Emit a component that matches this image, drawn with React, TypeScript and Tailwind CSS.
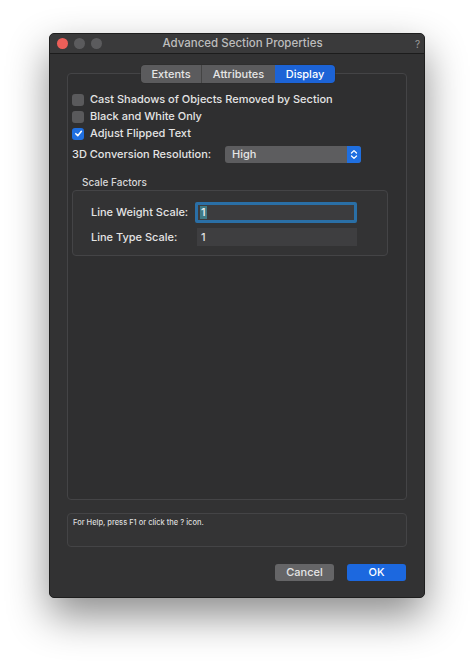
import React from "react";

const font = { fontFamily: '"Inter", "Liberation Sans", sans-serif' };

const Checkbox = ({ checked, label }: { checked?: boolean; label: string }) => (
  <div className="flex items-center gap-[6px] h-[17px]">
    {checked ? (
      <div className="w-[12px] h-[12px] rounded-[3px] bg-[#1f6fe0] flex items-center justify-center">
        <svg width="9" height="9" viewBox="0 0 10 10">
          <path d="M2 5.2 L4.2 7.4 L8.2 2.6" stroke="white" strokeWidth="1.7" fill="none" strokeLinecap="round" strokeLinejoin="round" />
        </svg>
      </div>
    ) : (
      <div className="w-[12px] h-[12px] rounded-[3px] bg-[#5a5a5c]" />
    )}
    <span className="text-[11px] font-medium text-[#e4e4e4]">{label}</span>
  </div>
);

const App = () => {
  return (
    <div className="w-[474px] h-[664px] bg-white pt-[33px] pl-[49px]" style={font}>
      <div className="w-[376px] h-[565px] bg-[#323233] rounded-[5px] border border-[#1e1e1e] shadow-[0_18px_40px_rgba(0,0,0,0.45)] flex flex-col overflow-hidden">
        {/* title bar */}
        <div className="h-[20px] bg-[#3a3a3b] border-b border-[#1c1c1c] flex items-center px-[7px] relative">
          <div className="flex gap-[6px]">
            <div className="w-[11px] h-[11px] rounded-full bg-[#ec5f59]" />
            <div className="w-[11px] h-[11px] rounded-full bg-[#5b5b5d]" />
            <div className="w-[11px] h-[11px] rounded-full bg-[#5b5b5d]" />
          </div>
          <div className="flex-1 text-center text-[11.5px] font-medium text-[#bdbdbd] pr-[34px]">Advanced Section Properties</div>
          <span className="absolute right-[4px] top-[3px] text-[10px] text-[#9a9a9a]">?</span>
        </div>

        <div className="flex-1 flex flex-col px-[17px]">
          {/* tab panel */}
          <div className="relative mt-[19px] h-[427px] rounded-[4px] border border-[#444446] bg-[#2f2f30]">
            <div className="absolute -top-[9px] left-[73px] flex h-[18px] rounded-[4px] overflow-hidden text-[11px] font-medium text-[#e6e6e6] shadow-[0_0_0_0.5px_#2a2a2a]">
              <div className="w-[61px] bg-[#5b5b5d] flex items-center justify-center border-r border-[#444]">Extents</div>
              <div className="w-[73px] bg-[#5b5b5d] flex items-center justify-center">Attributes</div>
              <div className="w-[60px] bg-[#1c63d6] text-white flex items-center justify-center">Display</div>
            </div>

            <div className="pt-[17px] pl-[4px] flex flex-col">
              <Checkbox label="Cast Shadows of Objects Removed by Section" />
              <Checkbox label="Black and White Only" />
              <Checkbox checked label="Adjust Flipped Text" />

              <div className="flex items-center mt-[4px] h-[17px]">
                <span className="text-[11px] font-medium text-[#e4e4e4] w-[153px]">3D Conversion Resolution:</span>
                <div className="w-[136px] h-[17px] rounded-[3px] bg-[#5d5d5f] flex items-center">
                  <span className="flex-1 pl-[7px] text-[11px] font-medium text-[#e6e6e6]">High</span>
                  <div className="w-[14px] h-[17px] rounded-r-[3px] bg-[#1f6fe0] flex items-center justify-center">
                    <svg width="8" height="11" viewBox="0 0 8 11">
                      <path d="M1.5 4 L4 1.6 L6.5 4 M1.5 7 L4 9.4 L6.5 7" stroke="white" strokeWidth="1.3" fill="none" strokeLinecap="round" strokeLinejoin="round" />
                    </svg>
                  </div>
                </div>
              </div>

              <div className="mt-[12px] pl-[10px] text-[10px] font-medium text-[#d8d8d8]">Scale Factors</div>
              <div className="mt-[0px] mr-[18px] h-[66px] rounded-[4px] border border-[#444446] bg-[#333334] pt-[11px] pl-[18px] flex flex-col gap-[5px]">
                <div className="flex items-center">
                  <span className="w-[104px] text-[11px] font-medium text-[#e4e4e4]">Line Weight Scale:</span>
                  <div className="w-[162px] h-[21px] rounded-[2px] border-[3px] border-[#2a6fa6] bg-[#3c3c3e] flex items-center pl-[2px]">
                    <span className="text-[11px] font-medium text-[#f0f0f0] bg-[#3f7a86] px-[1px] leading-[13px]">1</span>
                  </div>
                </div>
                <div className="flex items-center">
                  <span className="w-[106px] text-[11px] font-medium text-[#e4e4e4]">Line Type Scale:</span>
                  <div className="w-[160px] h-[18px] bg-[#3e3e40] flex items-center pl-[4px]">
                    <span className="text-[11px] font-medium text-[#e0e0e0]">1</span>
                  </div>
                </div>
              </div>
            </div>
          </div>

          {/* help box */}
          <div className="mt-[13px] h-[34px] rounded-[4px] border border-[#444446] bg-[#343435] pl-[5px] pt-[3px] text-[7.5px] font-medium text-[#dcdcdc]">
            For Help, press F1 or click the ? icon.
          </div>

          {/* buttons */}
          <div className="mt-[17px] flex justify-end gap-[13px] pr-[1px]">
            <div className="w-[59px] h-[17px] rounded-[3px] bg-[#656567] flex items-center justify-center text-[11px] font-medium text-[#e6e6e6]">Cancel</div>
            <div className="w-[59px] h-[17px] rounded-[3px] bg-[#1c68df] flex items-center justify-center text-[11px] font-medium text-white">OK</div>
          </div>
        </div>
      </div>
    </div>
  );
};

export default App;
